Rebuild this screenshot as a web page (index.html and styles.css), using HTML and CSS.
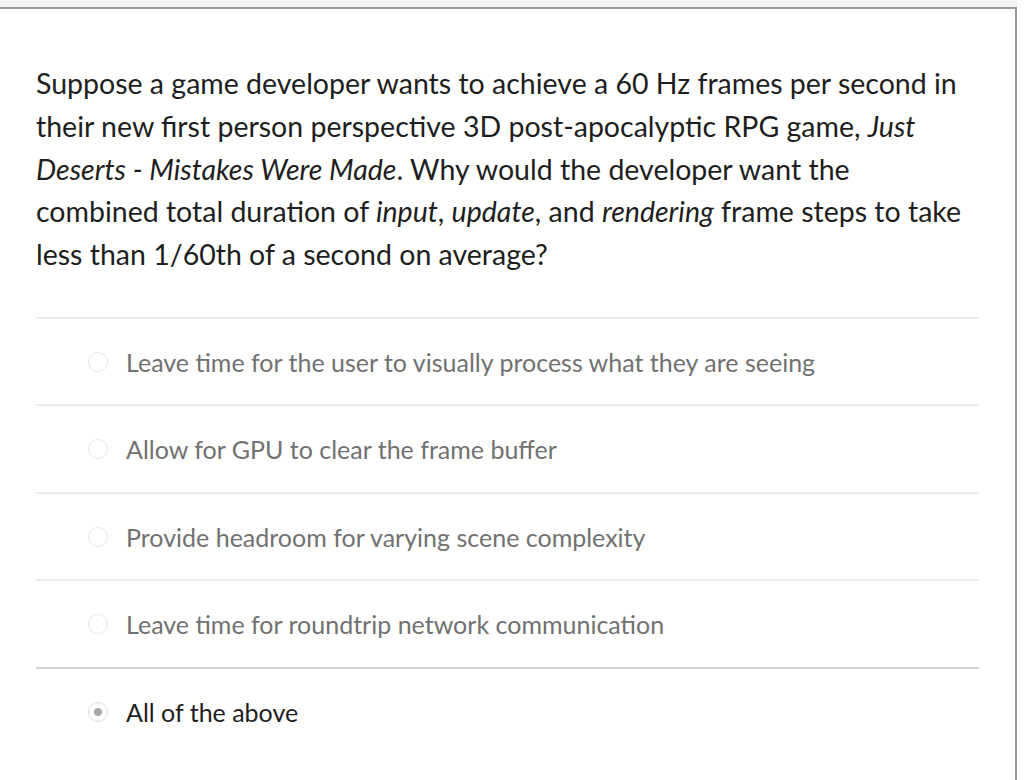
FILE: index.html
```html
<!DOCTYPE html>
<html>
<head>
<meta charset="utf-8">
<link rel="stylesheet" href="styles.css">
</head>
<body>
<div class="topstrip"></div>
<div class="card">
  <div class="question">
    <p class="prompt">Suppose a game developer wants to achieve a 60 Hz frames per second in their new first person perspective 3D post-apocalyptic RPG game, <em>Just Deserts - Mistakes Were Made</em>. Why would the developer want the combined total duration of <em>input</em>, <em>update</em>, and <em>rendering</em> frame steps to take less than 1/60th of a second on average?</p>
    <div class="answers">
      <div class="answer"><span class="radio"></span><span class="label">Leave time for the user to visually process what they are seeing</span></div>
      <div class="answer"><span class="radio"></span><span class="label">Allow for GPU to clear the frame buffer</span></div>
      <div class="answer"><span class="radio"></span><span class="label">Provide headroom for varying scene complexity</span></div>
      <div class="answer"><span class="radio"></span><span class="label">Leave time for roundtrip network communication</span></div>
      <div class="answer selected"><span class="radio"><span class="dot"></span></span><span class="label">All of the above</span></div>
    </div>
  </div>
</div>
</body>
</html>
```
FILE: styles.css
```css
html, body {
  margin: 0;
  padding: 0;
  background: #ffffff;
}
body {
  font-family: Lato, "Open Sans", sans-serif;
  width: 1024px;
  height: 780px;
  overflow: hidden;
}
.topstrip {
  height: 7px;
  width: 1017px;
  background: #f3f3f3;
}
.card {
  width: 1015px;
  height: 771px;
  border-top: 2px solid #9a9a9a;
  border-right: 2px solid #9a9a9a;
  background: #fff;
}
.question {
  padding: 53px 36px 0 36px;
  width: 943px;
}
.prompt {
  margin: 0;
  width: 935px;
  font-size: 28.5px;
  line-height: 42.75px;
  color: #1e1e1e;
}
.prompt em {
  font-style: italic;
}
.answers {
  margin-top: 41px;
}
.answer {
  display: flex;
  align-items: center;
  height: 85.5px;
  border-top: 2px solid #ececec;
  padding-left: 52px;
}
.answer.selected {
  border-top-color: #d2d2d2;
}
.radio {
  width: 20px;
  height: 20px;
  box-sizing: border-box;
  border: 1px solid #e6e6e6;
  border-radius: 50%;
  margin-right: 18px;
  display: flex;
  align-items: center;
  justify-content: center;
}
.selected .radio {
  border-color: #dcdcdc;
}
.dot {
  width: 8px;
  height: 8px;
  border-radius: 50%;
  background: #a8a8a8;
}
.label {
  font-size: 25px;
  color: #717171;
}
.selected .label {
  color: #1e1e1e;
}
```
